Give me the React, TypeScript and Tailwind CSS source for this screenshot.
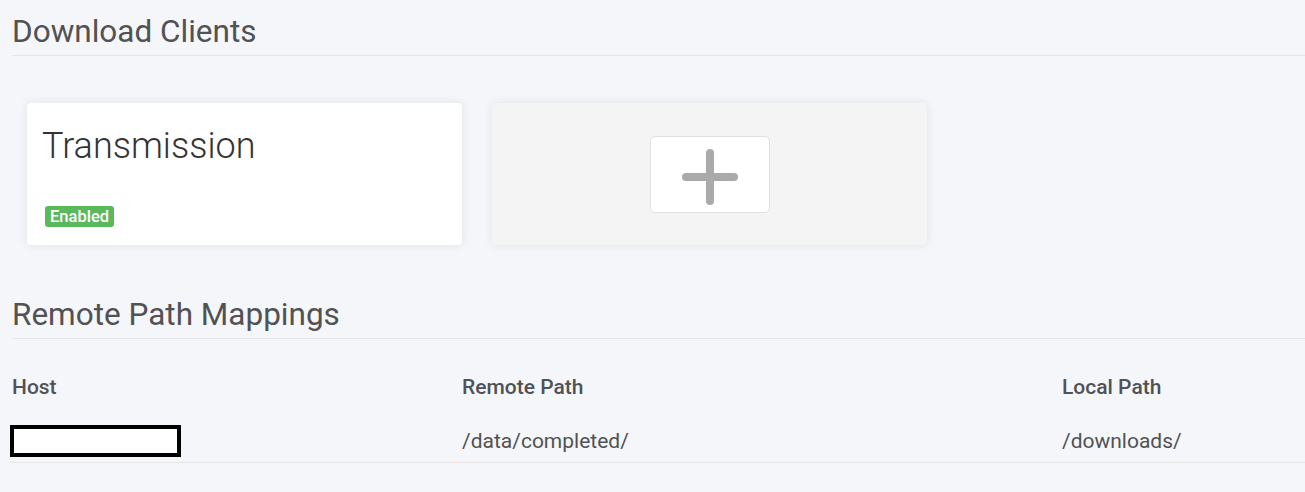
const font = { fontFamily: "Roboto, 'Liberation Sans', sans-serif" };

function SectionTitle({ children }: { children: React.ReactNode }) {
  return (
    <div className="border-b border-[#e5e5e5] pt-[13px] pb-[4px] text-[31.5px] leading-[38px] text-[#515253]">
      {children}
    </div>
  );
}

function PlusIcon() {
  return (
    <svg width="56" height="56" viewBox="0 0 56 56" fill="none">
      <path
        d="M28 4V52M4 28H52"
        stroke="#aaaaaa"
        strokeWidth="8"
        strokeLinecap="round"
      />
    </svg>
  );
}

export default function App() {
  return (
    <div
      className="min-h-[492px] w-full bg-[#f5f6fa] pl-[12px] text-[#515253]"
      style={font}
    >
      <SectionTitle>Download Clients</SectionTitle>

      <div className="mt-[47px] flex gap-[30px] pl-[15px]">
        <div className="flex h-[142px] w-[435px] flex-col rounded-[4px] bg-white px-[15px] pt-[22px] shadow-[0_0_10px_1px_rgba(0,0,0,0.07)]">
          <div className="text-[36px] font-light leading-[42px] text-[#333]">
            Transmission
          </div>
          <div className="mt-auto mb-[18px] ml-[3px] w-fit rounded-[3px] bg-[#5cb85c] px-[5px] text-[16.5px] font-medium leading-[21px] text-white">
            Enabled
          </div>
        </div>

        <div className="flex h-[142px] w-[435px] items-center justify-center rounded-[4px] bg-[#f4f4f4] shadow-[0_0_10px_1px_rgba(0,0,0,0.07)]">
          <button className="flex h-[77px] w-[120px] items-center justify-center rounded-[5px] border border-[#e0e0e0] bg-white pt-[6px]">
            <PlusIcon />
          </button>
        </div>
      </div>

      <div className="mt-[38px]">
        <SectionTitle>Remote Path Mappings</SectionTitle>
      </div>

      <div className="mt-[33px] grid grid-cols-[450px_600px_1fr] text-[21px] font-medium leading-[30px] text-[#515253]">
        <div>Host</div>
        <div>Remote Path</div>
        <div>Local Path</div>
      </div>

      <div className="-ml-[2px] mt-[23px] grid grid-cols-[452px_600px_1fr] items-center border-b border-[#e5e5e5] pb-[5px] text-[21px] leading-[30px]">
        <div>
          <div className="h-[32px] w-[171px] border-[4px] border-black bg-white" />
        </div>
        <div>/data/completed/</div>
        <div>/downloads/</div>
      </div>
    </div>
  );
}
